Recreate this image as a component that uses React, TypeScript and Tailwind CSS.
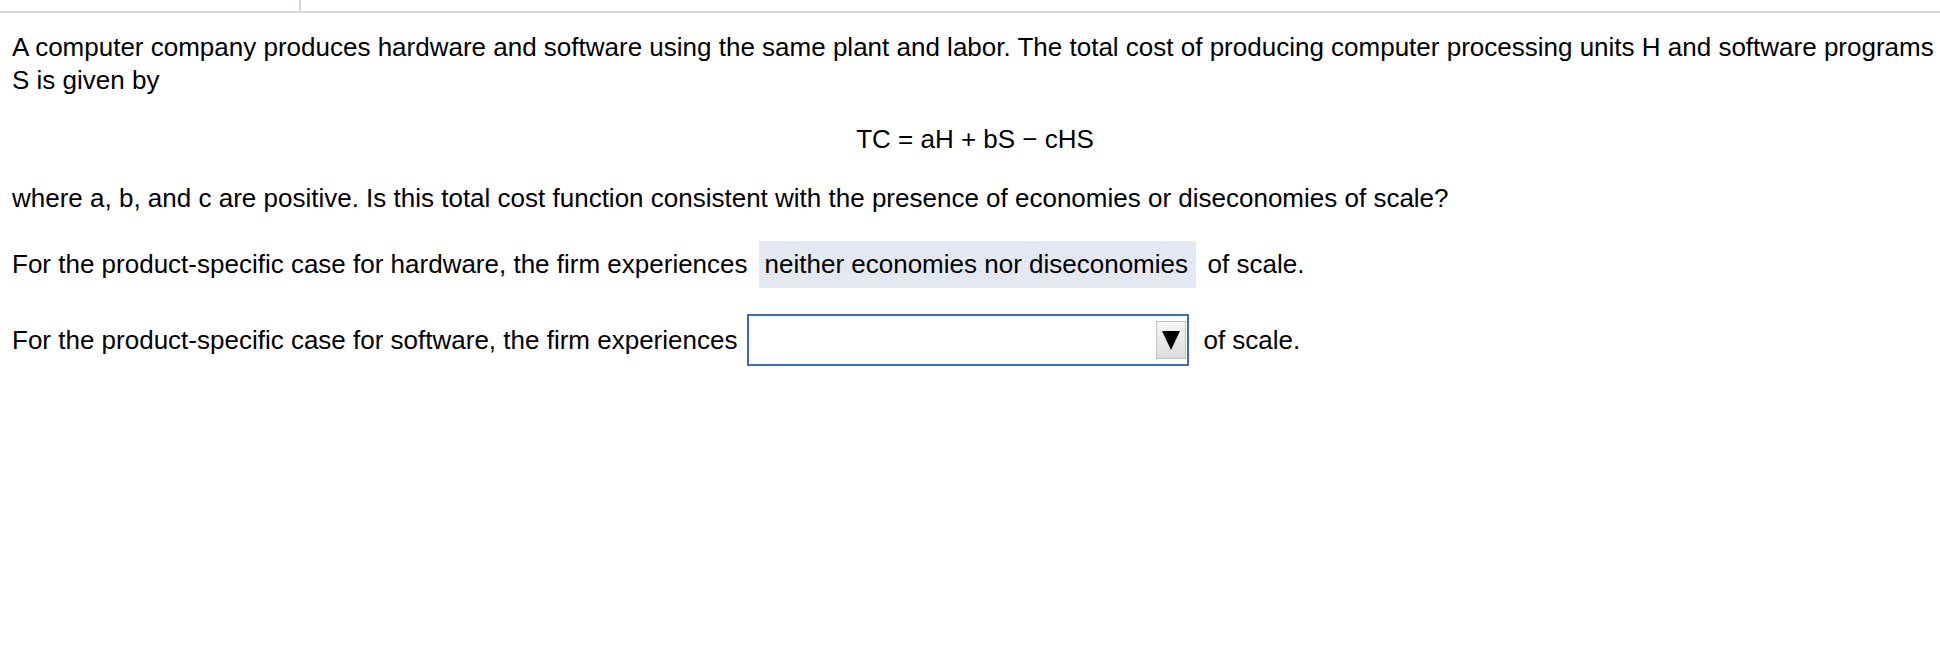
import React from "react";

export default function App() {
  return (
    <div className="min-h-[654px] w-[1940px] bg-white text-black font-['Liberation_Sans',Arial,sans-serif]">
      <div className="flex h-[13px] border-b-2 border-[#d3d7e0]">
        <div className="w-[301px] border-r-2 border-[#d3d7e0]" />
      </div>
      <div className="pl-[12px] pr-[2px] pt-[18px] text-[26px] leading-[33px]">
        <p>
          A computer company produces hardware and software using the same plant and labor. The total cost of producing computer processing units H and software programs S is given by
        </p>
        <p className="mt-[26px] text-center">TC = aH + bS − cHS</p>
        <p className="mt-[26px]">
          where a, b, and c are positive. Is this total cost function consistent with the presence of economies or diseconomies of scale?
        </p>
        <div className="mt-[26px] flex items-center">
          <span>For the product-specific case for hardware, the firm experiences</span>
          <span className="ml-[11px] flex h-[47px] w-[437px] items-center bg-[#e3e8f2] pl-[6px]">
            neither economies nor diseconomies
          </span>
          <span className="ml-[12px]">of scale.</span>
        </div>
        <div className="mt-[26px] flex items-center">
          <span>For the product-specific case for software, the firm experiences</span>
          <div className="ml-[10px] flex h-[52px] w-[442px] items-center justify-end border-2 border-[#3d66c6] bg-white pr-[1px]">
            <div className="flex h-[38px] w-[30px] items-center justify-center border border-[#c4c4c4] bg-gradient-to-b from-[#f6f6f6] to-[#dcdcdc]">
              <svg width="20" height="22" viewBox="0 0 20 22">
                <polygon points="1,2 19,2 10,21" fill="#000" />
              </svg>
            </div>
          </div>
          <span className="ml-[14px]">of scale.</span>
        </div>
      </div>
    </div>
  );
}
